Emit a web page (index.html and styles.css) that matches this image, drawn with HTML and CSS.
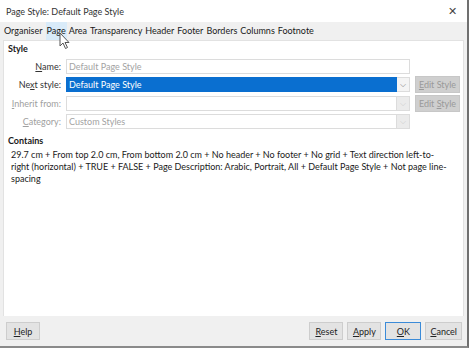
FILE: index.html
```html
<!DOCTYPE html>
<html lang="en">
<head>
  <meta charset="UTF-8">
  <title>Page Style: Default Page Style</title>
  <link rel="stylesheet" href="styles.css">
</head>
<body>
  <div class="window">
    <div class="titlebar">
      <span class="title">Page Style: Default Page Style</span>
      <span class="close">&#x2715;</span>
    </div>

    <div class="tabs">
      <span class="tab">Organiser</span>
      <span class="tab hover">Page</span>
      <span class="tab">Area</span>
      <span class="tab">Transparency</span>
      <span class="tab">Header</span>
      <span class="tab">Footer</span>
      <span class="tab">Borders</span>
      <span class="tab">Columns</span>
      <span class="tab">Footnote</span>
      <svg class="cursor" width="12" height="18" viewBox="0 0 12 18">
        <path d="M1 1 L1 14 L4 11 L6.5 16.5 L8.5 15.5 L6 10.5 L10 10.5 Z" fill="#fff" stroke="#555" stroke-width="1"/>
      </svg>
    </div>

    <div class="panel">
      <div class="heading">Style</div>
      <div class="form">
        <label class="lbl"><u>N</u>ame:</label>
        <div class="field disabled-text">Default Page Style</div>
        <div></div>

        <label class="lbl">Ne<u>x</u>t style:</label>
        <div class="combo">
          <div class="field selected">Default Page Style</div>
          <div class="arrow">&#x2335;</div>
        </div>
        <button class="edit"><u>E</u>dit Style</button>

        <label class="lbl dim"><u>I</u>nherit from:</label>
        <div class="combo">
          <div class="field"></div>
          <div class="arrow off">&#x2335;</div>
        </div>
        <button class="edit">Edit <u>S</u>tyle</button>

        <label class="lbl dim"><u>C</u>ategory:</label>
        <div class="combo">
          <div class="field disabled-text">Custom Styles</div>
          <div class="arrow off">&#x2335;</div>
        </div>
        <div></div>
      </div>

      <div class="heading contains">Contains</div>
      <p class="desc">29.7 cm + From top 2.0 cm, From bottom 2.0 cm + No header + No footer + No grid + Text direction left-to-right (horizontal) + TRUE + FALSE + Page Description: Arabic, Portrait, All + Default Page Style + Not page line-spacing</p>
    </div>

    <div class="buttons">
      <button class="btn"><u>H</u>elp</button>
      <div class="right">
        <button class="btn"><u>R</u>eset</button>
        <button class="btn"><u>A</u>pply</button>
        <button class="btn default"><u>O</u>K</button>
        <button class="btn"><u>C</u>ancel</button>
      </div>
    </div>
  </div>
</body>
</html>
```

FILE: styles.css
```css
body {
  margin: 0;
  background-color: #fff;
  font-family: Lato, "Open Sans", sans-serif;
  font-size: 9px;
  color: #1a1a1a;
}

.window {
  width: 467px;
  height: 346px;
  background-color: #f0f0f0;
  border-right: 2px solid #707070;
  border-bottom: 2px solid #8a8a8a;
  display: flex;
  flex-direction: column;
}

.titlebar {
  height: 22px;
  background-color: #fff;
  display: flex;
  align-items: center;
  justify-content: space-between;
  padding: 0 10px 0 6px;
  font-size: 9px;
  color: #333;
}

.close {
  font-size: 11px;
  color: #444;
}

.tabs {
  height: 18px;
  display: flex;
  align-items: center;
  padding-left: 4px;
  position: relative;
}

.tab {
  padding: 2px 0;
  margin-right: 3px;
  line-height: 14px;
}

.tab.hover {
  background-color: #d9ebf9;
  padding: 2px 1px;
  margin-left: 0;
  margin-right: 2px;
}

.cursor {
  position: absolute;
  left: 59px;
  top: 10px;
}

.panel {
  flex: 1;
  background-color: #fff;
  margin: 0 3px;
  border: 1px solid #e2e2e2;
  border-bottom: none;
  padding: 1px 0 0 4px;
}

.heading {
  font-weight: bold;
  line-height: 14px;
}

.form {
  display: grid;
  grid-template-columns: 56px 344px 45px;
  column-gap: 5px;
  row-gap: 2px;
  margin-top: 3px;
  margin-left: -3px;
  align-items: center;
}

.lbl {
  text-align: right;
  white-space: nowrap;
  color: #333;
}

.lbl.dim {
  color: #a0a0a0;
}

.field {
  height: 13px;
  border: 1px solid #dcdcdc;
  line-height: 13px;
  padding-left: 2px;
  background-color: #fff;
}

.disabled-text {
  color: #a3a3a3;
}

.combo {
  display: flex;
}

.combo .field {
  flex: 1;
}

.field.selected {
  background-color: #0a6fd0;
  border-color: #0a6fd0;
  color: #fff;
}

.arrow {
  width: 12px;
  height: 13px;
  border: 1px solid #dcdcdc;
  border-left: none;
  font-size: 8px;
  line-height: 13px;
  text-align: center;
  color: #777;
  background-color: #f4f4f4;
}

.arrow.off {
  color: #ccc;
  background-color: #ebebeb;
}

.edit {
  height: 17px;
  padding: 0;
  font-family: inherit;
  font-size: 9px;
  color: #9a9a9a;
  background-color: #cfcfcf;
  border: 1px solid #c7c7c7;
}

.contains {
  margin-top: 5px;
}

.desc {
  margin: 1px 0 0 3px;
  line-height: 12px;
  width: 440px;
}

.buttons {
  height: 30px;
  display: flex;
  align-items: center;
  justify-content: space-between;
  padding: 0 5px 0 6px;
}

.right {
  display: flex;
  gap: 4px;
}

.btn {
  height: 18px;
  min-width: 34px;
  padding: 0 4px;
  font-family: inherit;
  font-size: 9px;
  color: #222;
  background-color: #e3e3e3;
  border: 1px solid #cdcdcd;
}

.btn.default {
  border: 1px solid #3b8bd8;
  min-width: 36px;
}
```
